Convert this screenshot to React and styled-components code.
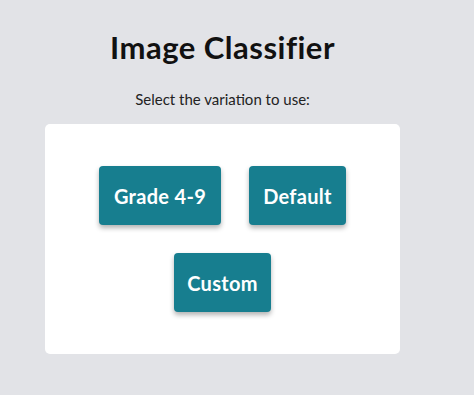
import React from "react";
import styled, { createGlobalStyle } from "styled-components";

const GlobalStyle = createGlobalStyle`
  html, body {
    margin: 0;
    padding: 0;
    background: #e2e3e7;
    font-family: Lato, "Open Sans", sans-serif;
  }
`;

const Page = styled.main`
  width: 474px;
  height: 395px;
  box-sizing: border-box;
  padding: 29px 0 0 45px;
`;

const Column = styled.div`
  width: 355px;
  display: flex;
  flex-direction: column;
  align-items: center;
`;

const Title = styled.h1`
  margin: 0;
  font-size: 31px;
  line-height: 36px;
  font-weight: 700;
  letter-spacing: 0.5px;
  color: #111;
`;

const Subtitle = styled.p`
  margin: 24px 0 0;
  font-size: 15px;
  line-height: 20px;
  color: #222;
`;

const Card = styled.section`
  margin-top: 15px;
  width: 355px;
  box-sizing: border-box;
  padding: 42px 40px;
  background: #fff;
  border-radius: 5px;
  display: flex;
  flex-wrap: wrap;
  justify-content: center;
  gap: 28px;
`;

const Choice = styled.button`
  width: ${({ $w }) => $w}px;
  height: 59px;
  border: none;
  border-radius: 4px;
  background: #177e8f;
  color: #fff;
  font-family: Lato, "Open Sans", sans-serif;
  font-size: 20px;
  font-weight: 700;
  letter-spacing: 0.3px;
  box-shadow: 0 3px 5px rgba(0, 0, 0, 0.3);
  cursor: pointer;
`;

const options = [
  { label: "Grade 4-9", w: 122 },
  { label: "Default", w: 97 },
  { label: "Custom", w: 97 },
];

export default function App() {
  return (
    <>
      <GlobalStyle />
      <Page>
        <Column>
          <Title>Image Classifier</Title>
          <Subtitle>Select the variation to use:</Subtitle>
          <Card>
            {options.map((o) => (
              <Choice key={o.label} $w={o.w}>
                {o.label}
              </Choice>
            ))}
          </Card>
        </Column>
      </Page>
    </>
  );
}
